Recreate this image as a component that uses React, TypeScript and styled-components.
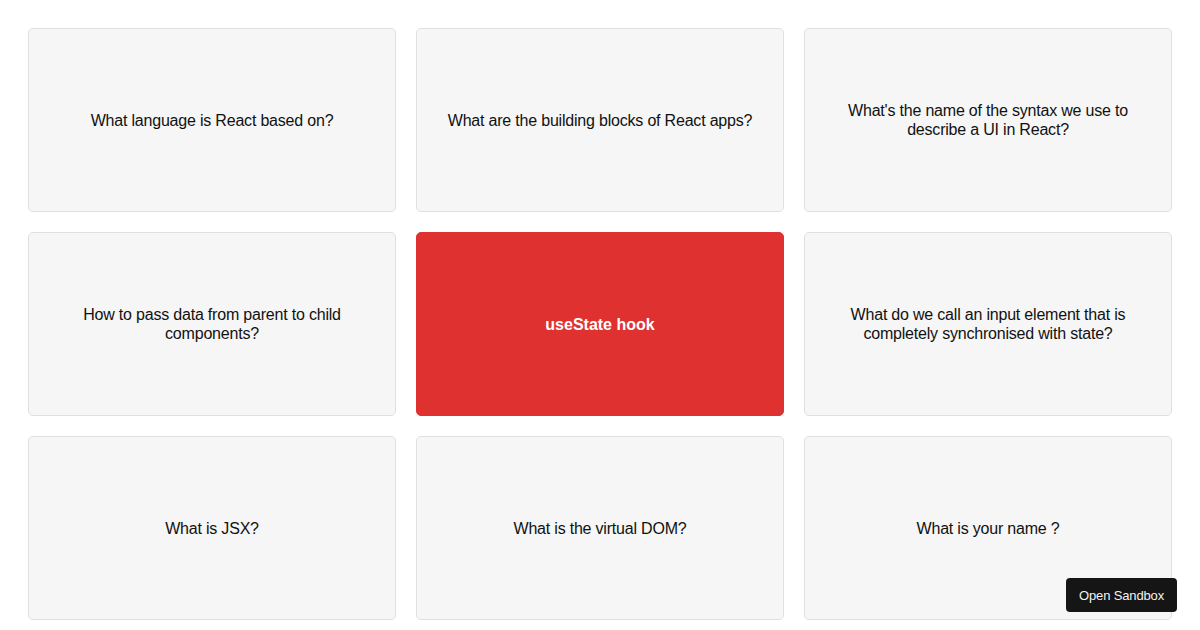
import React from "react";
import styled, { createGlobalStyle } from "styled-components";

const GlobalStyle = createGlobalStyle`
  html, body {
    margin: 0;
    padding: 0;
    background: #ffffff;
    font-family: "Liberation Sans", Arial, Helvetica, sans-serif;
    color: #111;
  }
`;

const Page = styled.div`
  padding: 28px;
`;

const Grid = styled.div`
  display: grid;
  grid-template-columns: repeat(3, 1fr);
  grid-auto-rows: 184px;
  gap: 20px;
`;

const Card = styled.div<{ $flipped?: boolean }>`
  display: flex;
  align-items: center;
  justify-content: center;
  box-sizing: border-box;
  padding: 0 24px;
  border: 1px solid ${(p) => (p.$flipped ? "#e03131" : "#e0e0e0")};
  border-radius: 5px;
  background: ${(p) => (p.$flipped ? "#e03131" : "#f6f6f6")};
  color: ${(p) => (p.$flipped ? "#ffffff" : "#111")};
  font-size: 16px;
  font-weight: ${(p) => (p.$flipped ? 700 : 400)};
  letter-spacing: ${(p) => (p.$flipped ? "0" : "-0.2px")};
  text-align: center;
  line-height: 19px;
  cursor: pointer;
`;

const SandboxButton = styled.a`
  position: fixed;
  right: 23px;
  bottom: 18px;
  display: flex;
  align-items: center;
  height: 34px;
  padding: 0 13px;
  border-radius: 4px;
  background: #151515;
  color: #f2f2f2;
  font-size: 13px;
  letter-spacing: -0.15px;
  text-decoration: none;
  font-family: "Liberation Sans", Arial, sans-serif;
`;

interface Question {
  id: number;
  question: string;
  answer: string;
}

const questions: Question[] = [
  { id: 1, question: "What language is React based on?", answer: "JavaScript" },
  { id: 2, question: "What are the building blocks of React apps?", answer: "Components" },
  {
    id: 3,
    question: "What's the name of the syntax we use to describe a UI in React?",
    answer: "JSX",
  },
  { id: 4, question: "How to pass data from parent to child components?", answer: "Props" },
  {
    id: 5,
    question: "How to give components memory?",
    answer: "useState hook",
  },
  {
    id: 6,
    question: "What do we call an input element that is completely synchronised with state?",
    answer: "Controlled element",
  },
  { id: 7, question: "What is JSX?", answer: "JavaScript XML" },
  { id: 8, question: "What is the virtual DOM?", answer: "A copy of the DOM" },
  { id: 9, question: "What is your name ?", answer: "React" },
];

export default function App() {
  const selectedId = 5;
  return (
    <Page>
      <GlobalStyle />
      <Grid>
        {questions.map((q) => (
          <Card key={q.id} $flipped={q.id === selectedId}>
            <p>{q.id === selectedId ? q.answer : q.question}</p>
          </Card>
        ))}
      </Grid>
      <SandboxButton href="#">Open Sandbox</SandboxButton>
    </Page>
  );
}
